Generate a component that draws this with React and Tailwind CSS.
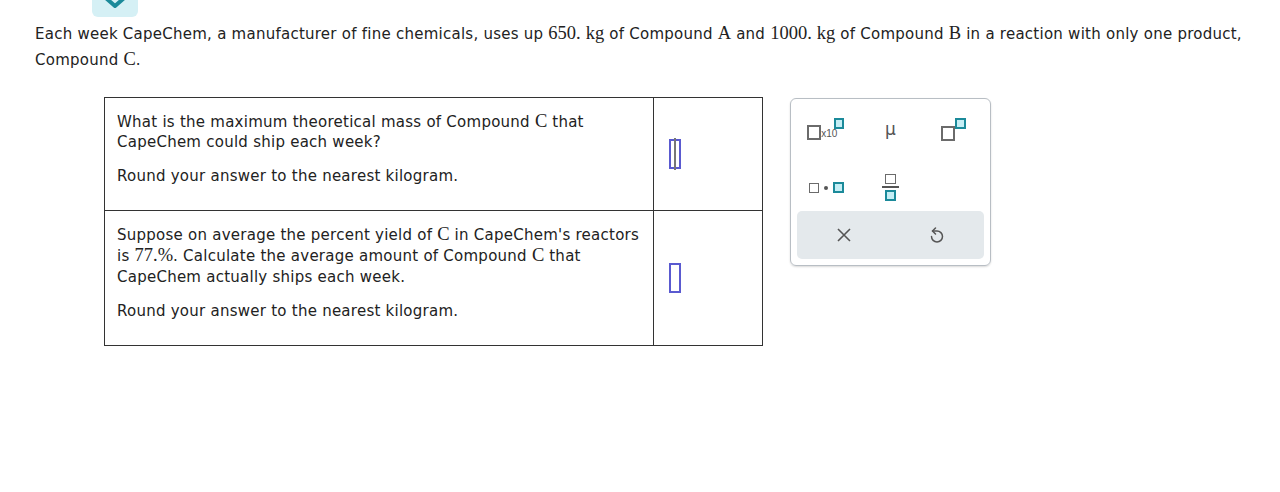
import React from 'react';

const M = ({ children }) => (
    <span className="font-['Liberation_Serif',serif] text-[18.5px] leading-none tracking-normal">{children}</span>
);

const Sq = ({ filled, className = '' }) => (
    <span
        className={`inline-block border-2 ${filled ? 'border-[#1b8a9a] bg-[#c5eef5]' : 'border-[#6b6b6b] bg-white'} ${className}`}
    />
);

const AnswerBox = ({ cursor }) => (
    <div className="relative w-[12px] h-[30px] border-2 border-[#5a5ad0]">
        {cursor && (
            <div className="absolute left-[3px] top-[-3px] bottom-[-3px] w-[2px] bg-[#777]" />
        )}
    </div>
);

const App = () => {
    return (
        <div className="relative w-[1280px] h-[492px] bg-white font-['DejaVu_Sans',Verdana,sans-serif] text-[#222] text-[15px] tracking-[0.25px] overflow-hidden">
            {/* collapsed tab at the top */}
            <div className="absolute left-[92px] top-[-10px] w-[46px] h-[27px] rounded-[6px] bg-[#d5f0f5] flex items-start justify-center pt-[8px]">
                <svg width="24" height="12" viewBox="0 0 24 12">
                    <path d="M4 1 L12 8 L20 1" fill="none" stroke="#1b8a9a" strokeWidth="4" strokeLinecap="round" strokeLinejoin="round" />
                </svg>
            </div>

            <p className="pl-[35px] pr-[30px] pt-[21px] leading-[26px]">
                Each week CapeChem, a manufacturer of fine chemicals, uses up <M>650.</M> <M>kg</M> of Compound <M>A</M> and <M>1000.</M> <M>kg</M> of Compound <M>B</M> in a reaction with only one product, Compound <M>C</M>.
            </p>

            <div className="flex items-start gap-[27px] pl-[104px] pt-[24px]">
                {/* question table */}
                <table className="border-collapse border border-[#333] w-[659px]">
                    <tbody>
                        <tr className="h-[113px]">
                            <td className="border border-[#333] align-top w-[549px] px-[12px] pt-[14px] leading-[20px]">
                                <p>What is the maximum theoretical mass of Compound <M>C</M> that CapeChem could ship each week?</p>
                                <p className="mt-[14px]">Round your answer to the nearest kilogram.</p>
                            </td>
                            <td className="border border-[#333] align-middle pl-[15px]">
                                <AnswerBox cursor />
                            </td>
                        </tr>
                        <tr className="h-[135px]">
                            <td className="border border-[#333] align-top px-[12px] pt-[14px] leading-[21px]">
                                <p>Suppose on average the percent yield of <M>C</M> in CapeChem's reactors is <M>77.%</M>. Calculate the average amount of Compound <M>C</M> that CapeChem actually ships each week.</p>
                                <p className="mt-[13px]">Round your answer to the nearest kilogram.</p>
                            </td>
                            <td className="border border-[#333] align-middle pl-[15px]">
                                <AnswerBox />
                            </td>
                        </tr>
                    </tbody>
                </table>

                {/* math palette */}
                <div className="mt-[1px] w-[201px] h-[168px] rounded-[6px] border border-[#b8bec4] shadow-[0_1px_2px_rgba(0,0,0,0.15)] px-[6px] pt-[11px] pb-[6px] flex flex-col tracking-normal">
                    <div className="grid grid-cols-3 gap-y-[14px] flex-1">
                        <div className="flex items-center justify-center h-[40px] pr-[4px]">
                            <div className="relative w-[38px] h-[26px]">
                                <Sq className="absolute left-0 bottom-[3px] w-[14px] h-[15px]" />
                                <span className="absolute left-[14px] bottom-[2px] text-[10px] text-[#555] font-['Liberation_Sans',sans-serif]">x10</span>
                                <Sq filled className="absolute left-[27px] top-[1px] w-[10px] h-[11px]" />
                            </div>
                        </div>
                        <div className="flex items-center justify-center h-[40px] text-[17px] text-[#555] font-['DejaVu_Sans',sans-serif]">μ</div>
                        <div className="flex items-center justify-center h-[40px]">
                            <div className="relative w-[28px] h-[26px]">
                                <Sq className="absolute left-[2px] bottom-[2px] w-[14px] h-[15px]" />
                                <Sq filled className="absolute left-[16px] top-[1px] w-[11px] h-[11px]" />
                            </div>
                        </div>
                        <div className="flex items-center justify-center h-[40px] gap-[5px] pr-[4px]">
                            <Sq className="w-[10px] h-[10px] border-[1.5px]" />
                            <span className="w-[4px] h-[4px] rounded-full bg-[#555]" />
                            <Sq filled className="w-[11px] h-[11px]" />
                        </div>
                        <div className="flex flex-col items-center justify-center h-[40px] gap-[2px]">
                            <Sq className="w-[11px] h-[10px] border-[1.5px]" />
                            <span className="w-[17px] h-[1.5px] bg-[#555]" />
                            <Sq filled className="w-[11px] h-[11px]" />
                        </div>
                        <div />
                    </div>
                    <div className="h-[48px] rounded-[5px] bg-[#e4e9ec] flex items-center">
                        <div className="flex-1 flex justify-center">
                            <svg width="16" height="16" viewBox="0 0 16 16">
                                <path d="M2 2 L14 14 M14 2 L2 14" stroke="#555" strokeWidth="1.6" fill="none" />
                            </svg>
                        </div>
                        <div className="flex-1 flex justify-center">
                            <svg width="18" height="18" viewBox="0 0 18 18">
                                <path d="M4.5 5 H9 A5.5 5.5 0 1 1 3.5 10.5" stroke="#555" strokeWidth="1.5" fill="none" strokeLinecap="round" />
                                <path d="M7.5 2 L4.5 5 L7.5 8" stroke="#555" strokeWidth="1.5" fill="none" strokeLinecap="round" strokeLinejoin="round" />
                            </svg>
                        </div>
                    </div>
                </div>
            </div>
        </div>
    );
};

export default App;
